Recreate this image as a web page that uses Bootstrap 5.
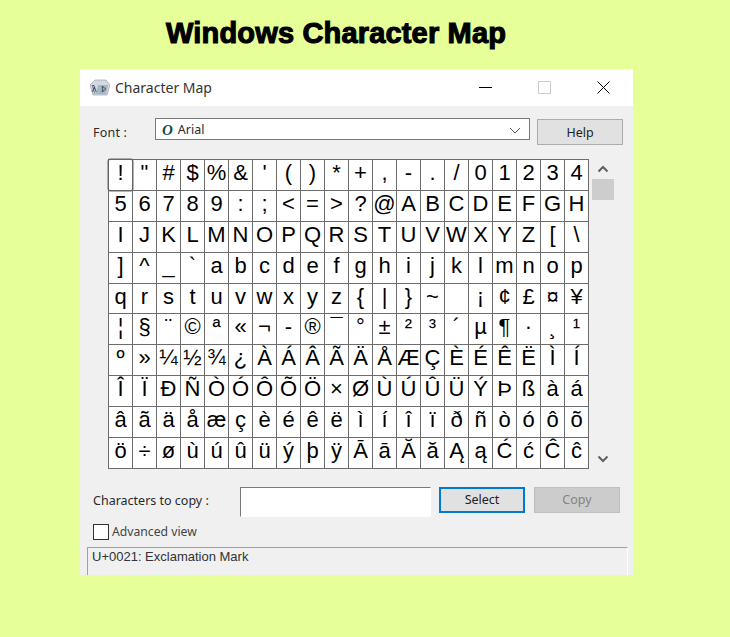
<!DOCTYPE html>
<html lang="en">
<head>
<meta charset="utf-8">
<title>Windows Character Map</title>
<link rel="stylesheet" href="https://cdn.jsdelivr.net/npm/bootstrap@5.3.0/dist/css/bootstrap.min.css">
<style>
html,body{height:100%}
body{background:#e6ff99;margin:0;font-family:"Liberation Sans",Arial,sans-serif;color:#000;overflow:hidden}
.page-title{height:69px;margin:0;padding:17px 0 0 166px;font:bold 29px/32px "Liberation Sans",sans-serif;-webkit-text-stroke:1.1px #000;color:#000;letter-spacing:.17px;white-space:nowrap}
.cm-window{width:553px;height:506px;margin-left:80px;background:#f0f0f0;font-family:"Noto Sans","Open Sans",sans-serif;color:#2a2a2a;font-size:12.5px}
.cm-titlebar{height:37px;background:#fff;padding-left:10px;padding-right:23px}
.cm-titlebar .cm-name{font-size:14px;margin-left:5px;color:#333}
.cm-ctrls{margin-left:auto;gap:46px}
.cm-toprow{padding:12px 10px 0 13px;height:53px}
.cm-fontlabel{width:62px;padding-top:6px;letter-spacing:.2px}
.cm-fontbox{width:375px;height:22px;background:#fff;border:1px solid #7a7a7a;padding:2px 8px 0 6px}
.cm-fontbox .cm-o{font:italic bold 15px "Liberation Serif",serif;color:#0d4a4a;margin-right:5px}
.cm-btn.btn{width:86px;height:26px;padding:0;border-radius:0;background:#e1e1e1;border:1px solid #adadad;color:#222;font-size:12.5px;line-height:26px}
.cm-help{margin-left:7px;margin-top:1px}
.cm-gridrow{padding-left:28px}
.cm-grid{display:grid;grid-template-columns:repeat(20,1fr);grid-auto-rows:1fr;gap:1px;width:481px;height:310px;background:#6c6c6c;padding:1px}
.cm-grid span{background:#fff;color:#000;font:22px/26px "Liberation Sans",Arial,sans-serif;text-align:center;overflow:hidden}
.cm-grid span.cm-sel{box-shadow:0 0 0 1.5px #666;position:relative;border-radius:1px}
.cm-scroll{width:25px;margin-left:1px;height:310px;padding-top:6px}
.cm-thumb{width:22px;height:21px;background:#cdcdcd;margin-top:6px}
.cm-scrolldown{margin-top:auto;margin-bottom:6px}
.cm-copyrow{padding:18px 0 0 13px;height:51px}
.cm-copylabel{width:147px;padding-top:5px}
.cm-input.form-control{width:191px;height:30px;border-radius:0;border:1px solid #fff;border-top-color:#7a7a7a;border-left-color:#7a7a7a;padding:0 4px}
.cm-select{margin-left:8px}
.cm-select.btn{border:2px solid #0078d7;line-height:22px}
.cm-copy.btn,.cm-copy.btn:disabled{margin-left:9px;background:#ccc;border-color:#bfbfbf;color:#838383;opacity:1;line-height:24px}
.cm-advrow{padding-left:13px;height:24px;gap:3px;color:#444;font-size:12.2px}
.cm-check{width:16px;height:16px;border:1px solid #333;background:#fff}
.cm-status{margin:3px 5px 0 7px;height:28px;border-top:1px solid #a0a0a0;border-left:1px solid #a0a0a0;border-right:1px solid #fff;padding:1px 0 0 4px;font:13px/16px "Liberation Sans",Arial,sans-serif;color:#333}
</style>
</head>
<body>
<h1 class="page-title">Windows Character Map</h1>
<div class="cm-window">
  <div class="cm-titlebar d-flex align-items-center">
    <svg width="20" height="17" viewBox="0 0 20 17"><path d="M0 6 5 1h11l4 5-3 10H3z" fill="#d3d9e3" stroke="#8a93a3" stroke-width=".6"/><path d="M8 6h10l-2 9H6z" fill="#a7b6c4"/><path d="M2 6l3 9" stroke="#7d8796" stroke-width="1"/><text x="1.500" y="13" font-size="9" font-family="DejaVu Sans" fill="#25324a">λ</text><text x="11" y="13" font-size="9" font-family="Liberation Serif" fill="#1c4a4a">Þ</text></svg>
    <span class="cm-name">Character Map</span>
    <div class="cm-ctrls d-flex align-items-center">
      <svg width="13" height="13" viewBox="0 0 13 13"><path d="M0 6.500h13" stroke="#000"/></svg>
      <svg width="13" height="13" viewBox="0 0 13 13"><rect x=".5" y=".5" width="12" height="12" fill="none" stroke="#ccc"/></svg>
      <svg width="13" height="13" viewBox="0 0 13 13"><path d="M.5.5l12 12M12.500.5l-12 12" stroke="#000" fill="none"/></svg>
    </div>
  </div>
  <div class="cm-toprow d-flex align-items-start">
    <div class="cm-fontlabel">Font :</div>
    <div class="cm-fontbox d-flex align-items-center">
      <span class="cm-o">O</span><span>Arial</span>
      <svg class="ms-auto" width="12" height="7" viewBox="0 0 12 7"><path d="M1 1l5 5 5-5" fill="none" stroke="#555"/></svg>
    </div>
    <button type="button" class="btn cm-btn cm-help">Help</button>
  </div>
  <div class="cm-gridrow d-flex">
    <div class="cm-grid">
      <span class="cm-sel">!</span><span>"</span><span>#</span><span>$</span><span>%</span><span>&amp;</span><span>'</span><span>(</span><span>)</span><span>*</span><span>+</span><span>,</span><span>-</span><span>.</span><span>/</span><span>0</span><span>1</span><span>2</span><span>3</span><span>4</span>
      <span>5</span><span>6</span><span>7</span><span>8</span><span>9</span><span>:</span><span>;</span><span>&lt;</span><span>=</span><span>&gt;</span><span>?</span><span>@</span><span>A</span><span>B</span><span>C</span><span>D</span><span>E</span><span>F</span><span>G</span><span>H</span>
      <span>I</span><span>J</span><span>K</span><span>L</span><span>M</span><span>N</span><span>O</span><span>P</span><span>Q</span><span>R</span><span>S</span><span>T</span><span>U</span><span>V</span><span>W</span><span>X</span><span>Y</span><span>Z</span><span>[</span><span>\</span>
      <span>]</span><span>^</span><span>_</span><span>`</span><span>a</span><span>b</span><span>c</span><span>d</span><span>e</span><span>f</span><span>g</span><span>h</span><span>i</span><span>j</span><span>k</span><span>l</span><span>m</span><span>n</span><span>o</span><span>p</span>
      <span>q</span><span>r</span><span>s</span><span>t</span><span>u</span><span>v</span><span>w</span><span>x</span><span>y</span><span>z</span><span>{</span><span>|</span><span>}</span><span>~</span><span></span><span>¡</span><span>¢</span><span>£</span><span>¤</span><span>¥</span>
      <span>¦</span><span>§</span><span>¨</span><span>©</span><span>ª</span><span>«</span><span>¬</span><span>-</span><span>®</span><span>¯</span><span>°</span><span>±</span><span>²</span><span>³</span><span>´</span><span>µ</span><span>¶</span><span>·</span><span>¸</span><span>¹</span>
      <span>º</span><span>»</span><span>¼</span><span>½</span><span>¾</span><span>¿</span><span>À</span><span>Á</span><span>Â</span><span>Ã</span><span>Ä</span><span>Å</span><span>Æ</span><span>Ç</span><span>È</span><span>É</span><span>Ê</span><span>Ë</span><span>Ì</span><span>Í</span>
      <span>Î</span><span>Ï</span><span>Ð</span><span>Ñ</span><span>Ò</span><span>Ó</span><span>Ô</span><span>Õ</span><span>Ö</span><span>×</span><span>Ø</span><span>Ù</span><span>Ú</span><span>Û</span><span>Ü</span><span>Ý</span><span>Þ</span><span>ß</span><span>à</span><span>á</span>
      <span>â</span><span>ã</span><span>ä</span><span>å</span><span>æ</span><span>ç</span><span>è</span><span>é</span><span>ê</span><span>ë</span><span>ì</span><span>í</span><span>î</span><span>ï</span><span>ð</span><span>ñ</span><span>ò</span><span>ó</span><span>ô</span><span>õ</span>
      <span>ö</span><span>÷</span><span>ø</span><span>ù</span><span>ú</span><span>û</span><span>ü</span><span>ý</span><span>þ</span><span>ÿ</span><span>Ā</span><span>ā</span><span>Ă</span><span>ă</span><span>Ą</span><span>ą</span><span>Ć</span><span>ć</span><span>Ĉ</span><span>ĉ</span>
    </div>
    <div class="cm-scroll d-flex flex-column align-items-center">
      <svg width="12" height="8" viewBox="0 0 12 8"><path d="M1.500 6.500 6 2l4.500 4.500" fill="none" stroke="#606060" stroke-width="2"/></svg>
      <div class="cm-thumb"></div>
      <svg class="cm-scrolldown" width="12" height="8" viewBox="0 0 12 8"><path d="M1.500 1.500 6 6l4.500-4.500" fill="none" stroke="#606060" stroke-width="2"/></svg>
    </div>
  </div>
  <div class="cm-copyrow d-flex align-items-start">
    <div class="cm-copylabel">Characters to copy :</div>
    <input type="text" class="form-control cm-input" aria-label="Characters to copy">
    <button type="button" class="btn cm-btn cm-select">Select</button>
    <button type="button" class="btn cm-btn cm-copy" disabled>Copy</button>
  </div>
  <div class="cm-advrow d-flex align-items-center">
    <span class="cm-check"></span><span>Advanced view</span>
  </div>
  <div class="cm-status">U+0021: Exclamation Mark</div>
</div>
<script src="https://cdn.jsdelivr.net/npm/bootstrap@5.3.0/dist/js/bootstrap.bundle.min.js"></script>
</body>
</html>
